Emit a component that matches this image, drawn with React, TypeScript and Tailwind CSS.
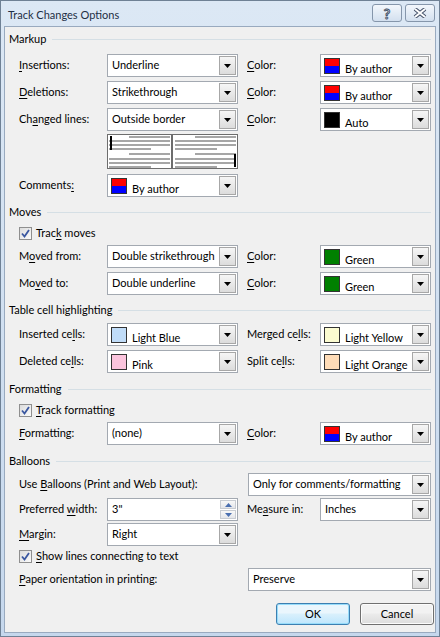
import React from 'react'

const FONT = { fontFamily: 'Lato, "Liberation Sans", Arial, sans-serif' }

type SwatchKind = 'author' | 'black' | 'green' | 'lightblue' | 'lightyellow' | 'pink' | 'lightorange'

const swatchClass: Record<SwatchKind, string> = {
  author: 'bg-[linear-gradient(#ff0000_0_50%,#0000ff_50%_100%)]',
  black: 'bg-black',
  green: 'bg-[#008000]',
  lightblue: 'bg-[#c0dcf8]',
  lightyellow: 'bg-[#fbfbd0]',
  pink: 'bg-[#fbc4dd]',
  lightorange: 'bg-[#fedcb8]',
}

// label with an underlined access key
function Label({ text, k }: { text: string; k: number }) {
  return (
    <span className="whitespace-nowrap">
      {text.slice(0, k)}
      <u className="underline underline-offset-2">{text.charAt(k)}</u>
      {text.slice(k + 1)}
    </span>
  )
}

function Arrow() {
  return (
    <div className="w-[17px] h-full border border-[#a7a7a7] bg-[linear-gradient(#f6f6f6,#dcdcdc)] flex items-center justify-center">
      <svg width="7" height="4" viewBox="0 0 7 4">
        <path d="M0 0h7L3.5 4z" fill="#000" />
      </svg>
    </div>
  )
}

function Combo({ value, width, swatch }: { value: string; width: string; swatch?: SwatchKind }) {
  return (
    <div className={`${width} h-[23px] border border-[#a3a9b1] bg-white flex p-[1px]`}>
      {swatch ? (
        <div className="flex-1 flex items-start pl-[2px] pt-[2px] whitespace-nowrap">
          <div className={`w-[16px] h-[16px] shrink-0 border border-[#333] ${swatchClass[swatch]}`} />
          <span className="ml-[5px] mt-[3px] leading-[15px]">{value}</span>
        </div>
      ) : (
        <div className="flex-1 flex items-center pl-[3px] whitespace-nowrap">{value}</div>
      )}
      <Arrow />
    </div>
  )
}

function Spinner({ value }: { value: string }) {
  return (
    <div className="w-[131px] h-[23px] border border-[#a3a9b1] bg-white flex p-[1px]">
      <div className="flex-1 flex items-center pl-[3px]">{value}</div>
      <div className="w-[16px] flex flex-col gap-[1px]">
        <div className="flex-1 border border-[#c8ccd2] bg-[linear-gradient(#f8f8f8,#e4e6ea)] flex items-center justify-center">
          <svg width="7" height="4" viewBox="0 0 7 4">
            <path d="M0 4h7L3.5 0z" fill="#4a6fb0" />
          </svg>
        </div>
        <div className="flex-1 border border-[#c8ccd2] bg-[linear-gradient(#f8f8f8,#e4e6ea)] flex items-center justify-center">
          <svg width="7" height="4" viewBox="0 0 7 4">
            <path d="M0 0h7L3.5 4z" fill="#4a6fb0" />
          </svg>
        </div>
      </div>
    </div>
  )
}

function Header({ title, mt }: { title: string; mt: string }) {
  return (
    <div className={`${mt} h-[16px] flex items-center pl-[4px] pr-[4px]`}>
      <span>{title}</span>
      <div className="flex-1 ml-[6px] h-px bg-[#d5dfe5]" />
    </div>
  )
}

function Check({ children, mt }: { children: React.ReactNode; mt: string }) {
  return (
    <div className={`${mt} h-[16px] flex items-center pl-[14px]`}>
      <div className="w-[13px] h-[13px] border border-[#8f8f8f] bg-[linear-gradient(135deg,#dcdcdc,#fbfbfb)] flex items-center justify-center">
        <svg width="9" height="9" viewBox="0 0 9 9">
          <path d="M1 4.5l2.5 3L8 1" fill="none" stroke="#3a57a0" strokeWidth="1.8" />
        </svg>
      </div>
      <span className="ml-[4px]">{children}</span>
    </div>
  )
}

type RowProps = {
  mt: string
  label: React.ReactNode
  combo: React.ReactNode
  label2?: React.ReactNode
  combo2?: React.ReactNode
}

function Row({ mt, label, combo, label2, combo2 }: RowProps) {
  return (
    <div className={`${mt} h-[23px] flex items-center pl-[14px]`}>
      <div className="w-[88px]">{label}</div>
      {combo}
      {label2 && <div className="w-[73px] ml-[9px]">{label2}</div>}
      {combo2}
    </div>
  )
}

function Preview() {
  const lines = (x0: number, x1: number) => (
    <>
      <rect x={x0 + 20} y={2} width={x1 - x0 - 20} height={2} fill="#a6a6a6" />
      <rect x={x0} y={6} width={x1 - x0} height={2} fill="#a6a6a6" />
      <rect x={x0} y={10} width={x1 - x0} height={2} fill="#a6a6a6" />
      <rect x={x0} y={14} width={42} height={2} fill="#a6a6a6" />
      <rect x={x0 + 20} y={19} width={x1 - x0 - 20} height={2} fill="#a6a6a6" />
      <rect x={x0} y={24} width={x1 - x0} height={2} fill="#a6a6a6" />
      <rect x={x0} y={28} width={x1 - x0} height={2} fill="#a6a6a6" />
      <rect x={x0} y={32} width={42} height={2} fill="#a6a6a6" />
    </>
  )
  return (
    <div className="mt-[3px] h-[35px] pl-[102px]">
      <svg width="131" height="35" viewBox="0 0 131 35">
        <rect x="0.5" y="0.5" width="130" height="34" fill="#fff" stroke="#6d6d6d" />
        <rect x="64" y="0" width="2" height="35" fill="#6d6d6d" />
        {lines(2, 63)}
        {lines(68, 129)}
        <rect x="3" y="2" width="2" height="14" fill="#000" />
        <rect x="127" y="20" width="2" height="13" fill="#000" />
      </svg>
    </div>
  )
}

export default function App() {
  const w1 = 'w-[131px]'
  const w2 = 'w-[111px]'

  return (
    <div
      className="w-[440px] h-[637px] border border-[#6f8195] bg-[linear-gradient(#dce8f5,#c6d8ed)] flex flex-col text-[11px] text-black"
      style={FONT}
    >
      {/* title bar */}
      <div className="h-[25px] flex items-start justify-between pl-[7px] pr-[4px]">
        <span className="mt-[6px] text-[#1e2f45]">Track Changes Options</span>
        <div className="flex gap-[3px] mt-[3px]">
          <div className="w-[30px] h-[18px] rounded-[3px] border border-[#8596ab] bg-[linear-gradient(#f3f7fc,#d3e0ef)] flex items-center justify-center text-[14px] font-bold text-white [-webkit-text-stroke:1px_#46536a]">
            ?
          </div>
          <div className="w-[30px] h-[18px] rounded-[3px] border border-[#8596ab] bg-[linear-gradient(#f3f7fc,#d3e0ef)] flex items-center justify-center">
            <svg width="14" height="10" viewBox="0 0 14 10">
              <path d="M2 1l10 8M12 1L2 9" stroke="#46536a" strokeWidth="4" />
              <path d="M2 1l10 8M12 1L2 9" stroke="#fff" strokeWidth="2" />
            </svg>
          </div>
        </div>
      </div>

      {/* body */}
      <div className="flex-1 mx-[3px] mb-[3px] bg-[#f0f0f0] border border-[#99aabf] flex flex-col">
        <Header title="Markup" mt="mt-[4px]" />
        <Row
          mt="mt-[7px]"
          label={<Label text="Insertions:" k={0} />}
          combo={<Combo value="Underline" width={w1} />}
          label2={<Label text="Color:" k={0} />}
          combo2={<Combo value="By author" width={w2} swatch="author" />}
        />
        <Row
          mt="mt-[4px]"
          label={<Label text="Deletions:" k={0} />}
          combo={<Combo value="Strikethrough" width={w1} />}
          label2={<Label text="Color:" k={0} />}
          combo2={<Combo value="By author" width={w2} swatch="author" />}
        />
        <Row
          mt="mt-[4px]"
          label={<Label text="Changed lines:" k={2} />}
          combo={<Combo value="Outside border" width={w1} />}
          label2={<Label text="Color:" k={0} />}
          combo2={<Combo value="Auto" width={w2} swatch="black" />}
        />
        <Preview />
        <Row
          mt="mt-[5px]"
          label={<Label text="Comments:" k={8} />}
          combo={<Combo value="By author" width={w1} swatch="author" />}
        />

        <Header title="Moves" mt="mt-[7px]" />
        <Check mt="mt-[5px]">
          <Label text="Track moves" k={4} />
        </Check>
        <Row
          mt="mt-[4px]"
          label={<Label text="Moved from:" k={1} />}
          combo={<Combo value="Double strikethrough" width={w1} />}
          label2={<Label text="Color:" k={0} />}
          combo2={<Combo value="Green" width={w2} swatch="green" />}
        />
        <Row
          mt="mt-[4px]"
          label={<Label text="Moved to:" k={2} />}
          combo={<Combo value="Double underline" width={w1} />}
          label2={<Label text="Color:" k={0} />}
          combo2={<Combo value="Green" width={w2} swatch="green" />}
        />

        <Header title="Table cell highlighting" mt="mt-[7px]" />
        <Row
          mt="mt-[5px]"
          label={<Label text="Inserted cells:" k={11} />}
          combo={<Combo value="Light Blue" width={w1} swatch="lightblue" />}
          label2={<Label text="Merged cells:" k={9} />}
          combo2={<Combo value="Light Yellow" width={w2} swatch="lightyellow" />}
        />
        <Row
          mt="mt-[4px]"
          label={<Label text="Deleted cells:" k={10} />}
          combo={<Combo value="Pink" width={w1} swatch="pink" />}
          label2={<Label text="Split cells:" k={8} />}
          combo2={<Combo value="Light Orange" width={w2} swatch="lightorange" />}
        />

        <Header title="Formatting" mt="mt-[8px]" />
        <Check mt="mt-[5px]">
          <Label text="Track formatting" k={0} />
        </Check>
        <Row
          mt="mt-[4px]"
          label={<Label text="Formatting:" k={0} />}
          combo={<Combo value="(none)" width={w1} />}
          label2={<Label text="Color:" k={0} />}
          combo2={<Combo value="By author" width={w2} swatch="author" />}
        />

        <Header title="Balloons" mt="mt-[8px]" />
        <div className="mt-[4px] h-[23px] flex items-center pl-[14px]">
          <div className="w-[229px]">
            <Label text="Use Balloons (Print and Web Layout):" k={4} />
          </div>
          <Combo value="Only for comments/formatting" width="w-[183px]" />
        </div>
        <Row
          mt="mt-[2px]"
          label={<Label text="Preferred width:" k={10} />}
          combo={<Spinner value={'3"'} />}
          label2={<Label text="Measure in:" k={2} />}
          combo2={<Combo value="Inches" width={w2} />}
        />
        <Row mt="mt-[2px]" label={<Label text="Margin:" k={0} />} combo={<Combo value="Right" width={w1} />} />
        <Check mt="mt-[2px]">
          <Label text="Show lines connecting to text" k={0} />
        </Check>
        <div className="mt-[4px] h-[23px] flex items-center pl-[14px]">
          <div className="w-[229px]">
            <Label text="Paper orientation in printing:" k={0} />
          </div>
          <Combo value="Preserve" width="w-[183px]" />
        </div>

        <div className="mt-[12px] flex justify-end gap-[10px] pr-[1px]">
          <button className="w-[74px] h-[22px] rounded-[3px] border border-[#3c7fb1] bg-[linear-gradient(#eaf6fd_0_45%,#d9f0fc_50%,#bee6fd)] shadow-[inset_0_0_0_1px_#97dcfa]">
            OK
          </button>
          <button className="w-[74px] h-[22px] rounded-[3px] border border-[#707070] bg-[linear-gradient(#f2f2f2_0_45%,#ebebeb_50%,#dddddd)] shadow-[inset_0_0_0_1px_#fcfcfc]">
            Cancel
          </button>
        </div>
      </div>
    </div>
  )
}
